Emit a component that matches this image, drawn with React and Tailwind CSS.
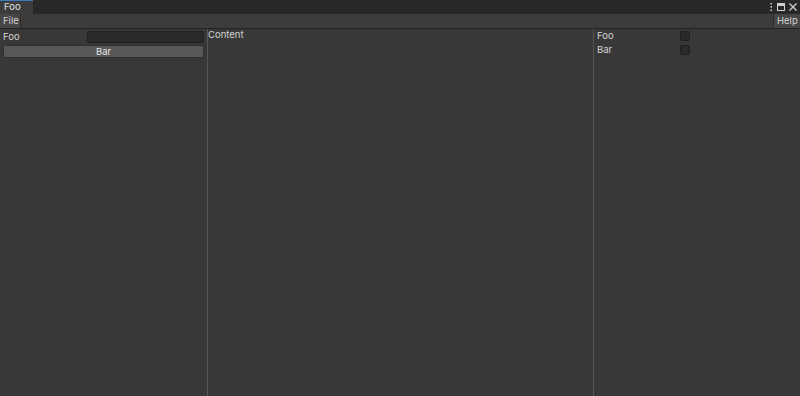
import React from 'react';

export default function App() {
  return (
    <div className="w-[800px] h-[396px] flex flex-col bg-[#383838] text-[#d4d4d4] overflow-hidden" style={{ fontFamily: 'Inter, "Liberation Sans", sans-serif' }}>
      {/* tab strip */}
      <div className="h-[14px] flex items-stretch bg-[#282828]">
        <div className="w-[33px] bg-[#3c3c3c] border-t border-[#3a79bb] text-[9.5px] leading-[12px] pl-[4px] text-[#e0e0e0]">Foo</div>
        <div className="flex-1" />
        <div className="flex items-center gap-[4px] pr-[3px]">
          <svg width="3" height="8" viewBox="0 0 3 8" fill="#d0d0d0"><rect x="0.5" y="0" width="1.5" height="1.5" /><rect x="0.5" y="3.2" width="1.5" height="1.5" /><rect x="0.5" y="6.5" width="1.5" height="1.5" /></svg>
          <svg width="8" height="8" viewBox="0 0 8 8" fill="none" stroke="#d0d0d0"><rect x="0.5" y="0.5" width="7" height="7" /><line x1="0" y1="2" x2="8" y2="2" strokeWidth="2" /></svg>
          <svg width="8" height="8" viewBox="0 0 8 8" stroke="#d0d0d0" strokeWidth="1.3"><line x1="0.5" y1="0.5" x2="7.5" y2="7.5" /><line x1="7.5" y1="0.5" x2="0.5" y2="7.5" /></svg>
        </div>
      </div>
      {/* menu bar */}
      <div className="h-[15px] flex bg-[#3c3c3c] border-b border-[#232323] text-[9.5px] leading-[14px]">
        <div className="w-[21px] pl-[3px] bg-[#464646] border-r border-[#2e2e2e]">File</div>
        <div className="flex-1" />
        <div className="w-[27px] pl-[3px] bg-[#464646] border-l border-[#2e2e2e]">Help</div>
      </div>
      {/* body */}
      <div className="flex-1 flex text-[9.5px]">
        <div className="w-[208px] border-r border-[#555555] flex flex-col gap-[2px] pt-[1px] px-[3px]">
          <div className="flex items-center h-[13px]">
            <span className="w-[84px] leading-[12px]">Foo</span>
            <div className="flex-1 h-[12px] bg-[#2a2a2a] border border-[#212121] rounded-[2px]" />
          </div>
          <div className="h-[13px] bg-[#585858] border border-[#303030] rounded-[2px] flex items-center justify-center text-[#e4e4e4] leading-[12px]">Bar</div>
        </div>
        <div className="w-[386px] border-r border-[#555555] leading-[12px]">Content</div>
        <div className="flex-1 flex flex-col gap-[2px] pt-[1px] pl-[3px]">
          <div className="flex items-center h-[12px]">
            <span className="w-[83px]">Foo</span>
            <div className="w-[10px] h-[10px] bg-[#2a2a2a] border border-[#202020] rounded-[2px]" />
          </div>
          <div className="flex items-center h-[12px]">
            <span className="w-[83px]">Bar</span>
            <div className="w-[10px] h-[10px] bg-[#2a2a2a] border border-[#202020] rounded-[2px]" />
          </div>
        </div>
      </div>
    </div>
  );
}
